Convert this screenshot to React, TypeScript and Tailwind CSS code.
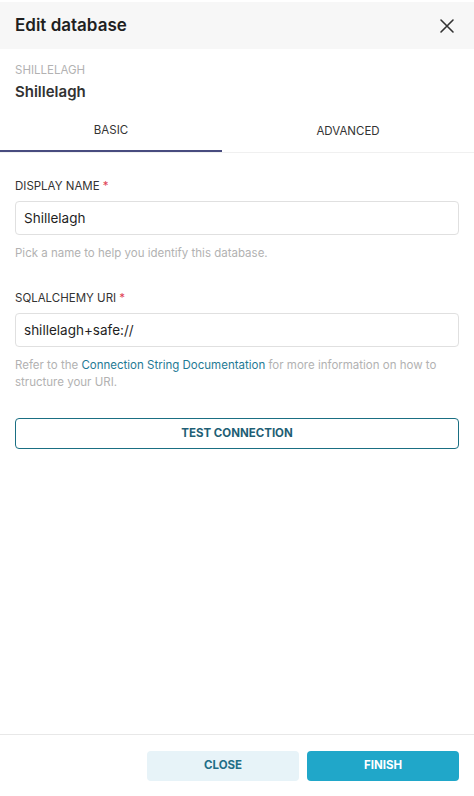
import React from "react";

export default function App() {
  return (
    <div className="w-[474px] h-[796px] bg-white flex flex-col text-[#333333]" style={{ fontFamily: "Inter, 'Noto Sans', sans-serif" }}>
      <div className="mt-[2px] h-[47px] bg-[#f7f7f7] flex items-center justify-between pl-[15px] pr-[19px] shrink-0">
        <span className="text-[17px] font-semibold text-[#1f1f1f]">Edit database</span>
        <svg width="16" height="16" viewBox="0 0 16 16" fill="none" stroke="#333" strokeWidth="1.6" strokeLinecap="round">
          <path d="M2 2L14 14M14 2L2 14" />
        </svg>
      </div>
      <div className="px-[15px] pt-[13px]">
        <div className="text-[11.5px] leading-[16px] text-[#b2b2b2]">SHILLELAGH</div>
        <div className="text-[15px] leading-[20px] font-semibold text-[#323232] mt-[4px]">Shillelagh</div>
      </div>
      <div className="flex mt-[10px] border-b border-[#f0f0f0]">
        <div className="w-[222px] h-[40px] flex items-center justify-center text-[11.5px] text-[#333] border-b-2 border-[#484c7f] -mb-px">BASIC</div>
        <div className="flex-1 h-[40px] flex items-center justify-center text-[11.5px] text-[#333]">ADVANCED</div>
      </div>
      <div className="px-[15px] pt-[25px] flex-1">
        <div className="text-[11.5px] leading-[16px] text-[#333] flex items-start">DISPLAY NAME<span className="text-[#e04355] ml-[3px]">*</span></div>
        <div className="mt-[7px] h-[34px] border border-[#e0e0e0] rounded-[4px] flex items-center px-[8px] text-[13.5px] text-[#1f1f1f]">Shillelagh</div>
        <div className="mt-[10px] text-[11.5px] leading-[16px] text-[#b2b2b2]">Pick a name to help you identify this database.</div>
        <div className="mt-[29px] text-[11.5px] leading-[16px] text-[#333] flex items-start">SQLALCHEMY URI<span className="text-[#e04355] ml-[3px]">*</span></div>
        <div className="mt-[7px] h-[34px] border border-[#e0e0e0] rounded-[4px] flex items-center px-[8px] text-[13.5px] text-[#1f1f1f]">shillelagh+safe://</div>
        <div className="mt-[10px] text-[11.5px] leading-[17px] text-[#b2b2b2]">
          Refer to the <span className="text-[#1f7a95]">Connection String Documentation</span> for more information on how to structure your URI.
        </div>
        <div className="mt-[27px] h-[31px] border border-[#1a6f83] rounded-[4px] flex items-center justify-center text-[11.5px] font-bold text-[#1f5f75]">TEST CONNECTION</div>
      </div>
      <div className="border-t border-[#e8e8e8] h-[62px] shrink-0 flex items-center justify-end gap-[8px] px-[15px]">
        <div className="w-[152px] h-[30px] rounded-[4px] bg-[#e7f3f8] flex items-center justify-center text-[11.5px] font-bold text-[#1f6e87]">CLOSE</div>
        <div className="w-[152px] h-[30px] rounded-[4px] bg-[#20a7c9] flex items-center justify-center text-[11.5px] font-bold text-white">FINISH</div>
      </div>
    </div>
  );
}
